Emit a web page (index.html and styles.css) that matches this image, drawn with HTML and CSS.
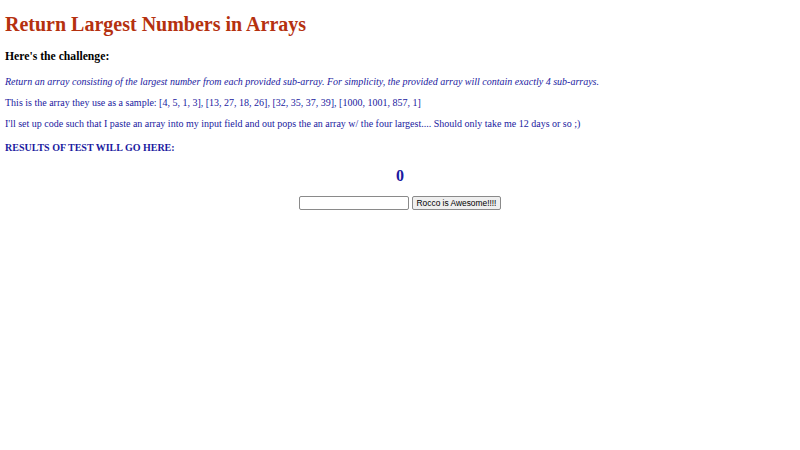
FILE: index.html
```html
<!DOCTYPE html>
<html>
<head>
<meta charset="utf-8">
<title>Return Largest Numbers in Arrays</title>
<link rel="stylesheet" href="styles.css">
</head>
<body>
<h1 class="title">Return Largest Numbers in Arrays</h1>
<h3 class="sub">Here's the challenge:</h3>
<p class="text italic">Return an array consisting of the largest number from each provided sub-array. For simplicity, the provided array will contain exactly 4 sub-arrays.</p>
<p class="text">This is the array they use as a sample: [4, 5, 1, 3], [13, 27, 18, 26], [32, 35, 37, 39], [1000, 1001, 857, 1]</p>
<p class="text">I'll set up code such that I paste an array into my input field and out pops the an array w/ the four largest.... Should only take me 12 days or so ;)</p>
<p class="text bold results">RESULTS OF TEST WILL GO HERE:</p>
<div class="result">0</div>
<div class="controls">
  <input class="field" type="text">
  <button class="btn" type="button">Rocco is Awesome!!!!</button>
</div>
</body>
</html>
```
FILE: styles.css
```css
html, body {
  background: #ffffff;
}
body {
  margin: 0;
  padding: 12px 5px;
  font-family: "Liberation Serif", "Times New Roman", serif;
  color: #1a1aa0;
}
.title {
  margin: 0 0 14px 0;
  font-size: 20px;
  line-height: 24px;
  color: #b5310f;
  font-weight: bold;
}
.sub {
  margin: 0 0 12px 0;
  font-size: 11.7px;
  line-height: 14px;
  color: #000000;
  font-weight: bold;
}
.text {
  margin: 0 0 9px 0;
  font-size: 10px;
  line-height: 12px;
}
.italic { font-style: italic; }
.bold { font-weight: bold; }
.results { margin-top: 12px; }
.result {
  margin: 13px 0 11px 0;
  text-align: center;
  font-size: 16px;
  font-weight: bold;
  line-height: 18px;
}
.controls {
  display: flex;
  justify-content: center;
  gap: 3px;
}
.field {
  box-sizing: border-box;
  width: 110px;
  height: 14px;
  padding: 1px 2px;
  border: 1px solid #8a8a8a;
  border-radius: 2px;
  font-size: 9px;
}
.btn {
  box-sizing: border-box;
  height: 14px;
  padding: 0 4px;
  font-family: "Liberation Sans", Arial, sans-serif;
  font-size: 8.4px;
  line-height: 12px;
  color: #000;
  background: #efefef;
  border: 1px solid #8a8a8a;
  border-radius: 2px;
}
```
